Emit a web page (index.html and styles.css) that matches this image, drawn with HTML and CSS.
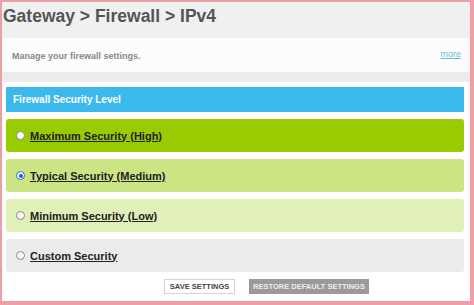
FILE: index.html
```html
<!DOCTYPE html>
<html>
<head>
<meta charset="utf-8">
<link rel="stylesheet" href="styles.css">
</head>
<body>
<div class="frame">
  <h1 class="title">Gateway &gt; Firewall &gt; IPv4</h1>
  <div class="desc">
    <span class="desc-text">Manage your firewall settings.</span>
    <a class="more" href="#">more</a>
  </div>
  <div class="spacer"></div>
  <div class="content">
    <div class="bar">Firewall Security Level</div>
    <label class="row row-high"><span class="radio"></span><span class="lbl">Maximum Security (High)</span></label>
    <label class="row row-med"><span class="radio checked"></span><span class="lbl">Typical Security (Medium)</span></label>
    <label class="row row-low"><span class="radio"></span><span class="lbl">Minimum Security (Low)</span></label>
    <label class="row row-custom"><span class="radio"></span><span class="lbl">Custom Security</span></label>
    <div class="buttons">
      <span class="btn btn-save">SAVE SETTINGS</span>
      <span class="btn btn-restore">RESTORE DEFAULT SETTINGS</span>
    </div>
  </div>
</div>
</body>
</html>
```
FILE: styles.css
```css
html, body { margin: 0; padding: 0; background: #fff; }
.frame {
  width: 474px; height: 305px; box-sizing: border-box;
  border-style: solid; border-color: #f09ea6;
  border-width: 2px 4px 4px 2px;
  font-family: "Liberation Sans", Arial, sans-serif;
  display: flex; flex-direction: column;
  overflow: hidden;
}
.title {
  margin: 0; height: 36px; background: #f0f0f0;
  font-size: 17.5px; font-weight: bold; color: #555;
  padding-left: 1px; line-height: 29px;
}
.desc {
  height: 34px; background: #fcfcfc;
  display: flex; align-items: center; justify-content: space-between;
  padding: 0 9px 0 10px;
}
.desc-text { font-size: 9px; font-weight: bold; color: #888; margin-top: 2px; }
.more { font-size: 9px; color: #6fb9dc; text-decoration: underline; margin-top: -3px; }
.spacer { height: 10px; background: #ececec; }
.content {
  padding: 5px 6px 0 4px;
  display: flex; flex-direction: column; gap: 7px;
}
.bar {
  height: 25px; background: #3bb9ec; color: #fff;
  font-size: 10px; font-weight: bold;
  display: flex; align-items: center; padding-left: 7px;
}
.row {
  height: 33px; border-radius: 3px;
  display: flex; align-items: center; padding-left: 10px;
  box-sizing: border-box;
}
.row-high { background: #99cc00; }
.row-med { background: #cce584; }
.row-low { background: #e1efb8; }
.row-custom { background: #ebebeb; }
.radio {
  width: 7px; height: 7px; border-radius: 50%;
  border: 1px solid #8a8a8a; background: #fafafa;
  margin-right: 5px; box-sizing: content-box;
  display: flex; align-items: center; justify-content: center;
}
.radio.checked { border-color: #2a70c8; }
.radio.checked::after {
  content: ""; width: 4px; height: 4px; border-radius: 50%; background: #1f5fbf;
}
.lbl {
  font-size: 11px; font-weight: bold; color: #222;
  text-decoration: underline;
}
.buttons {
  display: flex; gap: 14px; padding-left: 158px;
}
.btn {
  font-family: "Liberation Sans Narrow", "Liberation Sans", sans-serif;
  font-size: 7.5px; font-weight: bold; white-space: nowrap;
  height: 15px; box-sizing: border-box;
  display: flex; align-items: center; justify-content: center;
}
.btn-save { background: #fff; color: #444; border: 1px solid #d4d4d4; width: 71px; }
.btn-restore { background: #9a9a9a; color: #eee; width: 120px; }
```
